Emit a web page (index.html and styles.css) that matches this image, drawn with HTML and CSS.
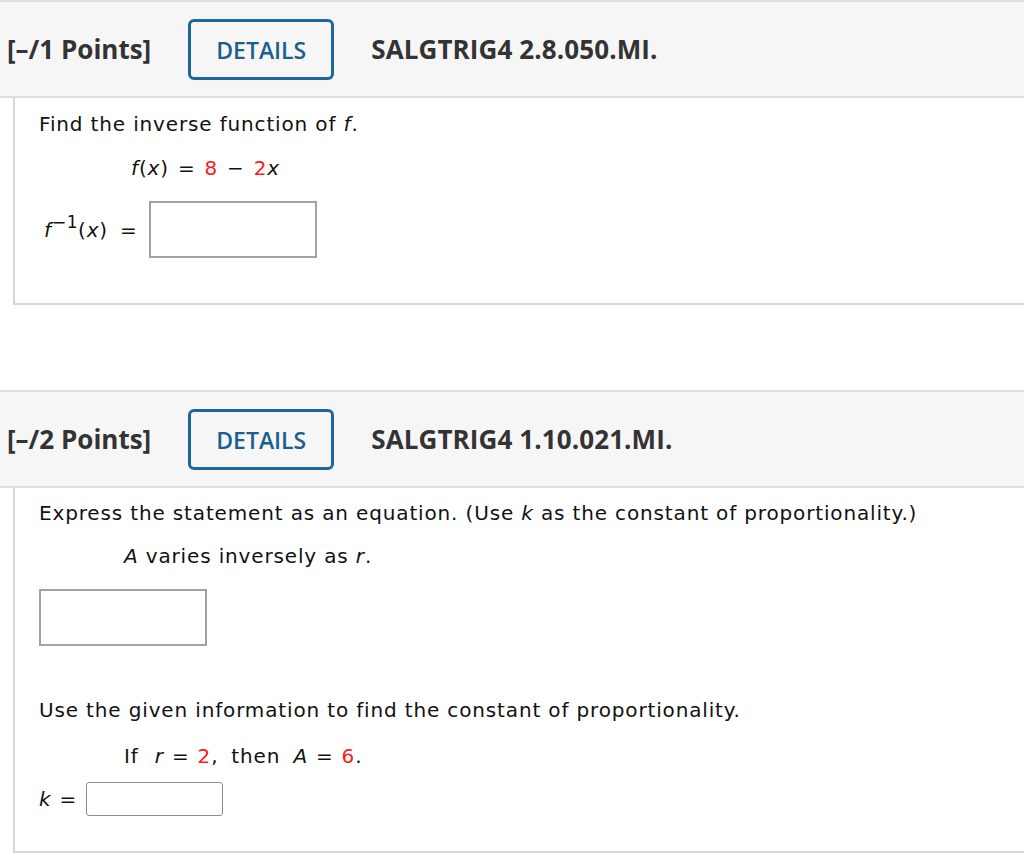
FILE: index.html
```html
<!DOCTYPE html>
<html>
<head>
<meta charset="utf-8">
<link rel="stylesheet" href="styles.css">
</head>
<body>
<div class="question q1">
  <div class="qhead">
    <span class="points">[–/1 Points]</span>
    <span class="details">DETAILS</span>
    <span class="qid">SALGTRIG4 2.8.050.MI.</span>
  </div>
  <div class="qbody b1">
    <p class="line first">Find the inverse function of <i>f</i>.</p>
    <p class="line eq1"><i>f</i>(<i>x</i>)<span class="op">=</span><span class="red">8</span><span class="op">−</span><span class="red">2</span><i>x</i></p>
    <div class="ansrow r1">
      <span class="lbl inv"><i>f</i><sup>−1</sup>(<i>x</i>)<span class="op eqop">=</span></span>
      <span class="box big"></span>
    </div>
  </div>
</div>

<div class="question q2">
  <div class="qhead">
    <span class="points">[–/2 Points]</span>
    <span class="details">DETAILS</span>
    <span class="qid">SALGTRIG4 1.10.021.MI.</span>
  </div>
  <div class="qbody b2">
    <p class="line first">Express the statement as an equation. (Use <i>k</i> as the constant of proportionality.)</p>
    <p class="line indent s2"><i>A</i> varies inversely as <i>r</i>.</p>
    <div class="box big solo"></div>
    <p class="line s3">Use the given information to find the constant of proportionality.</p>
    <p class="line indent s4">If <i class="sp">r</i><span class="op tight">=</span><span class="red">2</span>,<span class="gap"></span>then <i class="sp sp2">A</i><span class="op tight">=</span><span class="red">6</span>.</p>
    <div class="ansrow r2">
      <span class="lbl"><i>k</i><span class="op eqop k">=</span></span>
      <span class="box small"></span>
    </div>
  </div>
</div>
</body>
</html>
```
FILE: styles.css
```css
html, body {
  margin: 0;
  padding: 0;
  background: #ffffff;
}

body {
  width: 1024px;
  font-family: "DejaVu Sans", Verdana, sans-serif;
  color: #111;
}

.question.q2 {
  margin-top: 85px;
}

.qhead {
  box-sizing: border-box;
  height: 98px;
  background: #f6f6f6;
  border-top: 2px solid #dedede;
  border-bottom: 2px solid #dedede;
  display: flex;
  align-items: center;
  padding-left: 7px;
  gap: 37px;
  font-family: "Open Sans", "Liberation Sans", sans-serif;
}

.points,
.qid {
  font-size: 26px;
  font-weight: 700;
  color: #333;
}

.qid {
  letter-spacing: 0.1px;
}

.details {
  box-sizing: border-box;
  width: 146px;
  height: 61px;
  border: 3px solid #1d679a;
  border-radius: 6px;
  display: flex;
  align-items: center;
  justify-content: center;
  font-size: 23px;
  font-weight: 600;
  color: #1b5e8f;
  margin-top: 1px;
}

.qbody {
  margin-left: 13px;
  border-left: 2px solid #d6d6d6;
  border-bottom: 2px solid #d6d6d6;
  padding-left: 24px;
  font-size: 20px;
  line-height: 24px;
  letter-spacing: 0.85px;
}

.b1 {
  padding-top: 14px;
  padding-bottom: 45px;
}

.b2 {
  padding-top: 13px;
  padding-bottom: 35px;
}

.line {
  margin: 0;
}

.eq1 {
  margin-top: 20px;
  padding-left: 92px;
}

.indent {
  padding-left: 85px;
}

.s2 { margin-top: 19px; }
.s3 { margin-top: 52px; }
.s4 { margin-top: 22px; }

.op {
  display: inline-block;
  padding: 0 9px;
}

.op.tight {
  padding: 0 8px;
}

.eqop {
  padding: 0 11px 0 12px;
}

.eqop.k {
  padding: 0 9px 0 8px;
}

.red {
  color: #ff1a1a;
}

.sp {
  margin-left: 9px;
}

.sp.sp2 {
  margin-left: 6px;
}

.gap {
  display: inline-block;
  width: 13px;
}

sup {
  font-size: 17px;
  line-height: 0;
  vertical-align: 9px;
  letter-spacing: 0.5px;
}

.ansrow {
  display: flex;
  align-items: center;
}

.r1 {
  margin-top: 21px;
}

.r2 {
  margin-top: 14px;
}

.lbl.inv {
  padding-left: 5px;
}

.box {
  box-sizing: border-box;
  display: block;
  background: #fff;
}

.box.big {
  width: 168px;
  height: 57px;
  border: 2px solid #a2a2a2;
}

.box.solo {
  margin-top: 21px;
}

.box.small {
  width: 137px;
  height: 34px;
  border: 1px solid #8e8e8e;
  border-radius: 3px;
}
```
